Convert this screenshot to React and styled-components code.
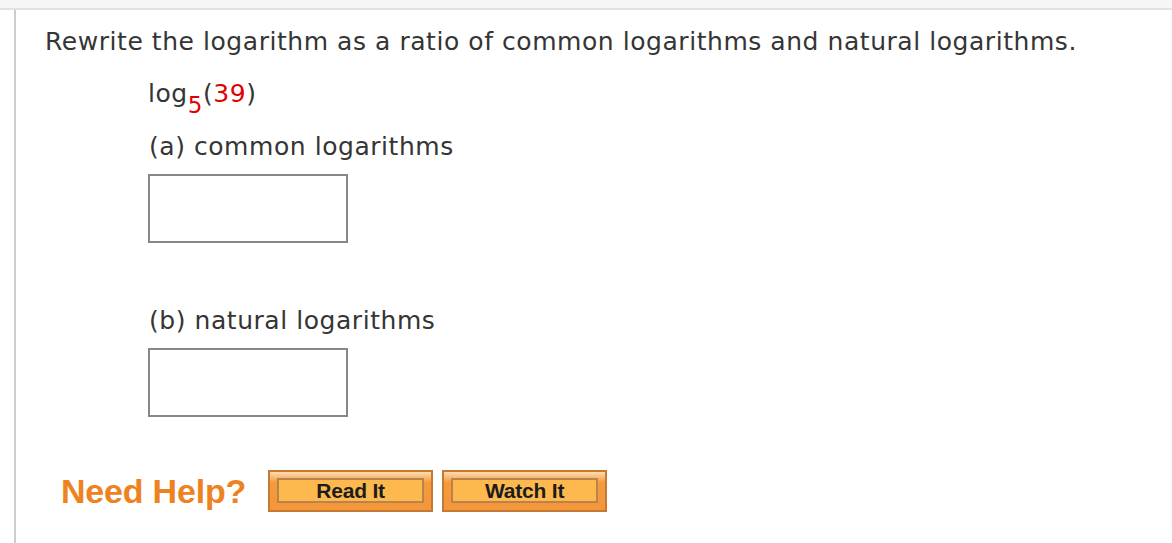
import styled, { createGlobalStyle } from "styled-components";

const GlobalStyle = createGlobalStyle`
  html, body {
    margin: 0;
    padding: 0;
    background: #fff;
  }
`;

const Page = styled.div`
  min-height: 543px;
  background: #fff;
  display: flex;
  flex-direction: column;
`;

const TopBand = styled.div`
  height: 8px;
  background: #f6f6f6;
  border-bottom: 2px solid #e2e2e2;
`;

const Body = styled.div`
  flex: 1;
  display: flex;
`;

const Gutter = styled.div`
  width: 14px;
  border-right: 2px solid #cdcdcd;
`;

const Question = styled.div`
  flex: 1;
  padding: 17px 0 0 29px;
  font-family: "DejaVu Sans", sans-serif;
  color: #353535;
  font-size: 25px;
  line-height: 30px;
  letter-spacing: 0.55px;
`;

const Prompt = styled.p`
  margin: 0;
  white-space: nowrap;
`;

const Indent = styled.div`
  padding-left: 103px;
  display: flex;
  flex-direction: column;
`;

const Expr = styled.div`
  margin-top: 22px;
  height: 30px;
`;

const Sub = styled.sub`
  color: #e00000;
  font-size: 23px;
  vertical-align: -11px;
  line-height: 0;
`;

const Red = styled.span`
  color: #e00000;
`;

const Label = styled.div`
  margin-top: ${(p) => p.$top}px;
  padding-left: 1px;
`;

const AnswerBox = styled.div`
  margin-top: 12px;
  width: 196px;
  height: 65px;
  border: 2px solid #878787;
  background: #fff;
`;

const HelpRow = styled.div`
  margin-top: 53px;
  margin-left: 16px;
  display: flex;
  align-items: center;
  gap: 9px;
`;

const HelpText = styled.span`
  font-family: "Liberation Sans", Arial, sans-serif;
  font-weight: bold;
  font-size: 34px;
  line-height: 42px;
  color: #ef8220;
  margin-right: 13px;
  letter-spacing: -0.2px;
`;

const HelpButton = styled.div`
  box-sizing: border-box;
  width: 165px;
  height: 42px;
  border: 2px solid #c47a35;
  background: linear-gradient(#fcdcae, #f59a3c 28%, #f4963a);
  padding: 6px 7px 7px 7px;
  display: flex;
`;

const ButtonFace = styled.div`
  flex: 1;
  border: 2px solid #b8834f;
  background: #fdb94d;
  display: flex;
  align-items: center;
  justify-content: center;
  font-family: "Liberation Sans", Arial, sans-serif;
  font-weight: bold;
  font-size: 21px;
  color: #1c1c1c;
  letter-spacing: -0.2px;
`;

export default function App() {
  return (
    <>
      <GlobalStyle />
      <Page>
        <TopBand />
        <Body>
          <Gutter />
          <Question>
            <Prompt>
              Rewrite the logarithm as a ratio of common logarithms and natural logarithms.
            </Prompt>
            <Indent>
              <Expr>
                log<Sub>5</Sub>(<Red>39</Red>)
              </Expr>
              <Label $top={23}>(a) common logarithms</Label>
              <AnswerBox />
              <Label $top={63}>(b) natural logarithms</Label>
              <AnswerBox />
            </Indent>
            <HelpRow>
              <HelpText>Need Help?</HelpText>
              <HelpButton>
                <ButtonFace>Read It</ButtonFace>
              </HelpButton>
              <HelpButton>
                <ButtonFace>Watch It</ButtonFace>
              </HelpButton>
            </HelpRow>
          </Question>
        </Body>
      </Page>
    </>
  );
}
